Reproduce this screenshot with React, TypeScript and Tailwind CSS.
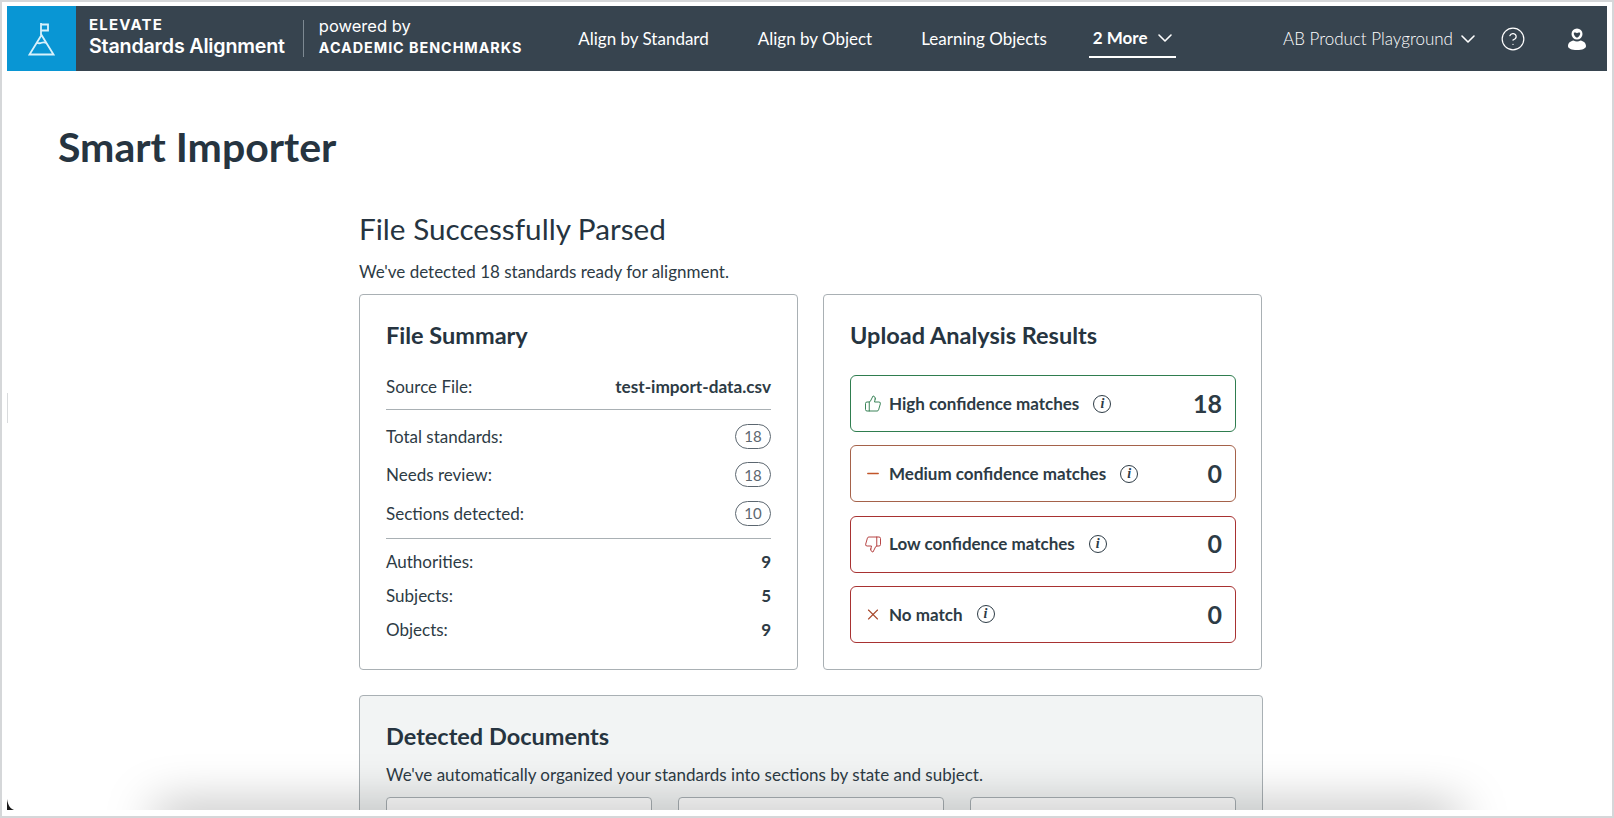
import { ChevronDown, CircleHelp, Minus, ThumbsDown, ThumbsUp, X } from "lucide-react";
import type { ReactNode } from "react";

const NAV_LINKS = ["Align by Standard", "Align by Object", "Learning Objects"];

const COUNT_ROWS = [
  { label: "Total standards:", value: "18" },
  { label: "Needs review:", value: "18" },
  { label: "Sections detected:", value: "10" },
];

const TOTAL_ROWS = [
  { label: "Authorities:", value: "9" },
  { label: "Subjects:", value: "5" },
  { label: "Objects:", value: "9" },
];

const RESULTS = [
  {
    label: "High confidence matches",
    value: "18",
    border: "border-[#2f7d4f]",
    icon: <ThumbsUp className="size-[19px] text-[#2f7d4f]" strokeWidth={1.25} />,
  },
  {
    label: "Medium confidence matches",
    value: "0",
    border: "border-[#a5624a]",
    icon: <Minus className="size-[19px] text-[#c2562a]" strokeWidth={1.75} />,
  },
  {
    label: "Low confidence matches",
    value: "0",
    border: "border-[#a83232]",
    icon: <ThumbsDown className="size-[19px] text-[#b23a3a]" strokeWidth={1.25} />,
  },
  {
    label: "No match",
    value: "0",
    border: "border-[#a83232]",
    icon: <X className="size-[19px] text-[#a8482c]" strokeWidth={1.5} />,
  },
];

function LogoMark() {
  return (
    <svg viewBox="0 0 27 34" className="h-[34px] w-[27px]" fill="none" stroke="#d8f1fb" strokeWidth="1.8">
      <path d="M13 13V1" />
      <path d="M13 2.500h7v6h-7" />
      <path d="M13.500 13 1.500 32.500h24z" />
      <path d="M8.500 20.500c2 1 3.500 1 5 .3s3-.7 5 0" />
    </svg>
  );
}

function UserIcon() {
  return (
    <svg viewBox="0 0 20 22" className="h-[22px] w-[20px]" fill="#ffffff">
      <circle cx="10" cy="6" r="5.500" />
      <path d="M6.800 4.800c1.500-.7 2.500-.3 3.200.4.700-.7 1.700-1.100 3.200-.4.300 2.200-1.400 4.100-3.200 5-1.800-.9-3.500-2.800-3.200-5z" fill="#37444f" />
      <path d="M1 18c0-3 2.500-5 5.500-5.500 1.100.7 2.200 1 3.500 1s2.400-.3 3.500-1C16.500 13 19 15 19 18c0 2.500-3.500 4-9 4s-9-1.500-9-4z" />
    </svg>
  );
}

function InfoIcon() {
  return (
    <span className="flex size-[18px] items-center justify-center rounded-full border border-[#2d3b45] font-['Liberation_Serif',serif] text-[14px] leading-none font-bold text-[#2d3b45] italic">
      i
    </span>
  );
}

function Card({ title, children }: { title: string; children: ReactNode }) {
  return (
    <section className="h-[376px] w-[439px] rounded-[4px] border border-[#a9b0b4] bg-white px-[26px] pt-[24px]">
      <h2 className="text-[23.500px] leading-[32px] font-bold text-[#263440]">{title}</h2>
      {children}
    </section>
  );
}

export default function App() {
  return (
    <div className="relative h-[818px] overflow-hidden border-x-2 border-t-2 border-b-2 border-[#d5d7d9] bg-white font-['Lato',sans-serif] text-[#2d3b45]">
      {/* Top nav */}
      <header className="mx-[5px] mt-[4px] flex h-[65px] items-center bg-[#37444f] text-white">
        <div className="flex h-full w-[69px] items-center justify-center bg-[#0996d4]">
          <LogoMark />
        </div>
        <div className="-mt-[3px] ml-[13px] font-['Inter',sans-serif]">
          <div className="text-[15px] leading-[18px] font-bold tracking-[0.08em]">ELEVATE</div>
          <div className="text-[19.700px] leading-[24px] font-semibold tracking-[-0.01em]">Standards Alignment</div>
        </div>
        <div className="mr-[15px] ml-[18px] h-[37px] w-px bg-[#7d8992]" />
        <div className="-mt-[3px] font-['Inter',sans-serif]">
          <div className="text-[16.500px] leading-[21px]">powered by</div>
          <div className="text-[14.400px] leading-[21px] font-bold tracking-[0.065em]">ACADEMIC BENCHMARKS</div>
        </div>
        <nav className="ml-[56px] flex items-center gap-[49px] text-[17px]">
          {NAV_LINKS.map((link) => (
            <span key={link}>{link}</span>
          ))}
          <span className="-ml-[7px] flex h-[38px] w-[87px] items-center gap-[5px] border-b-2 border-white pl-[4px] font-bold whitespace-nowrap">
            2 More
            <ChevronDown className="size-[24px] shrink-0" strokeWidth={1.6} />
          </span>
        </nav>
        <div className="ml-auto flex items-center text-[17px] font-light">
          <span>AB Product Playground</span>
          <ChevronDown className="ml-[3px] size-[24px]" strokeWidth={1.6} />
          <CircleHelp className="ml-[20px] size-[26px]" strokeWidth={1.1} />
          <span className="mr-[20px] ml-[41px]">
            <UserIcon />
          </span>
        </div>
      </header>

      <main>
        <h1 className="mt-[51px] ml-[56px] text-[41px] leading-[50px] font-bold text-[#263440]">Smart Importer</h1>

        <div className="ml-[357px] w-[904px]">
          <h2 className="mt-[37px] text-[29.700px] leading-[40px] text-[#263440]">File Successfully Parsed</h2>
          <p className="mt-[11px] text-[17px] leading-[24px]">We've detected 18 standards ready for alignment.</p>

          <div className="mt-[10px] flex gap-[25px]">
            <Card title="File Summary">
              <div className="mt-[23px] flex h-[36px] items-center justify-between border-b border-[#a9b0b4] pb-[10px] text-[17px]">
                <span>Source File:</span>
                <span className="text-[17.200px] font-bold">test-import-data.csv</span>
              </div>
              <div className="flex flex-col border-b border-[#a9b0b4] pt-[7px] pb-[5px] text-[17px]">
                {COUNT_ROWS.map((row) => (
                  <div key={row.label} className="flex h-[38.500px] items-center justify-between">
                    <span>{row.label}</span>
                    <span className="flex h-[25px] w-[36px] items-center justify-center rounded-full border border-[#5c6770] text-[15px] text-[#5c6770]">
                      {row.value}
                    </span>
                  </div>
                ))}
              </div>
              <div className="flex flex-col pt-[6px] text-[17px]">
                {TOTAL_ROWS.map((row) => (
                  <div key={row.label} className="flex h-[34px] items-center justify-between">
                    <span>{row.label}</span>
                    <span className="font-bold">{row.value}</span>
                  </div>
                ))}
              </div>
            </Card>

            <Card title="Upload Analysis Results">
              <div className="mt-[24px] -mr-px flex flex-col gap-[13.300px]">
                {RESULTS.map((r) => (
                  <div
                    key={r.label}
                    className={`flex h-[57px] items-center rounded-[6px] border bg-white pr-[13px] pl-[13px] ${r.border}`}
                  >
                    <span className="flex w-[18px] justify-center">{r.icon}</span>
                    <span className="ml-[7px] text-[17px] font-bold">{r.label}</span>
                    <span className="ml-[14px]">
                      <InfoIcon />
                    </span>
                    <span className="ml-auto text-[25px] font-bold">{r.value}</span>
                  </div>
                ))}
              </div>
            </Card>
          </div>

          {/* Detected documents, runs past the fold */}
          <section className="mt-[25px] h-[200px] rounded-[4px] border border-[#a9b0b4] bg-[#f2f4f4] px-[26px] pt-[24px]">
            <h2 className="text-[23.500px] leading-[32px] font-bold text-[#263440]">Detected Documents</h2>
            <p className="mt-[11px] text-[17px] leading-[24px]">
              We've automatically organized your standards into sections by state and subject.
            </p>
            <div className="mt-[10px] grid grid-cols-3 gap-[26px]">
              <div className="h-[100px] rounded-[4px] border border-[#a9b0b4] bg-white" />
              <div className="h-[100px] rounded-[4px] border border-[#a9b0b4] bg-white" />
              <div className="h-[100px] rounded-[4px] border border-[#a9b0b4] bg-white" />
            </div>
          </section>
        </div>
      </main>

      {/* Window shadow and bottom strip of the capture */}
      <div className="absolute inset-x-0 bottom-[6px] h-[70px] overflow-hidden">
        <div className="absolute inset-x-[150px] -bottom-[26px] h-[30px] rounded-full bg-black/30 blur-[24px]" />
      </div>
      <div className="absolute inset-x-0 bottom-0 h-[6px] bg-white" />
      <div className="absolute top-[391px] left-[5px] h-[30px] w-px bg-[#d9dbdd]" />
      <svg viewBox="0 0 7 11" className="absolute bottom-[6px] left-[5px] h-[11px] w-[7px]" fill="#1b1b1b">
        <path d="M0 0v11h7C3 9.500 1 6 0 0z" />
      </svg>
    </div>
  );
}
